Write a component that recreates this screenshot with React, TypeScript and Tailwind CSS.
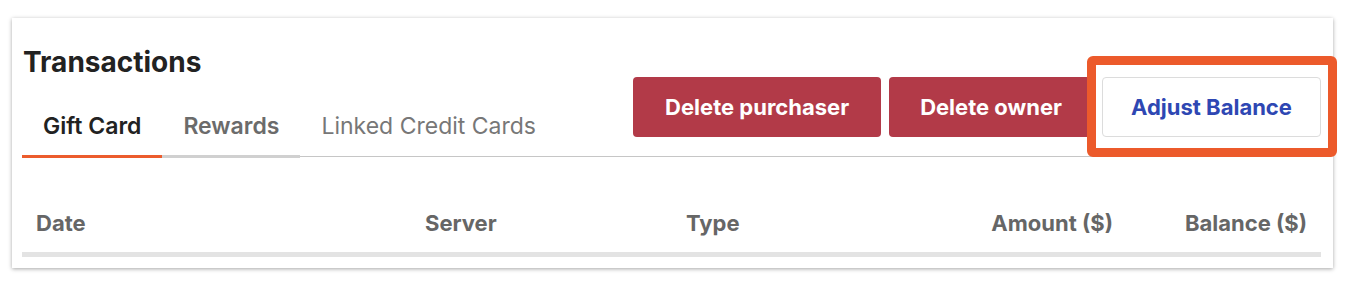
const TABS = [
  { label: "Gift Card", active: true },
  { label: "Rewards", visited: true },
  { label: "Linked Credit Cards" },
];

export default function App() {
  return (
    <div className="w-[1348px] h-[282px] bg-white pt-[18px] pl-[12px] font-['Inter',sans-serif]">
      <div className="w-[1321px] h-[250px] bg-white px-[10px] shadow-[0_1px_4px_rgba(0,0,0,0.35)]">
        <div className="flex justify-between h-[139px] border-b border-[#c6c6c6]">
          <div className="flex flex-col justify-between">
            <h1 className="pt-[28px] pl-[1px] text-[28px] leading-[32px] font-bold text-[#222]">
              Transactions
            </h1>
            <div className="flex mb-[-2px]">
              {TABS.map((tab) => (
                <div
                  key={tab.label}
                  className={`px-[21px] pb-[17px] text-[23px] leading-[24px] border-b-[3px] ${
                    tab.active
                      ? "border-[#ec5c2d] font-semibold text-[#222]"
                      : tab.visited
                        ? "border-[#d0d0d0] font-semibold text-[#6b6b6b]"
                        : "border-transparent text-[#777]"
                  }`}
                >
                  {tab.label}
                </div>
              ))}
            </div>
          </div>
          <div className="flex items-start gap-[8px] mt-[59px] mr-[2px]">
            <button
              type="button"
              className="h-[60px] px-[32px] rounded-[4px] bg-[#b23a48] text-white text-[22px] font-bold"
            >
              Delete purchaser
            </button>
            <button
              type="button"
              className="h-[60px] px-[31px] rounded-[4px] bg-[#b23a48] text-white text-[22px] font-bold"
            >
              Delete owner
            </button>
            <div className="relative ml-[1px]">
              <button
                type="button"
                className="w-[219px] h-[60px] rounded-[4px] border border-[#dcdcdc] bg-white text-[#2e47b3] text-[22px] font-bold"
              >
                Adjust Balance
              </button>
              <div className="absolute -left-[15px] -right-[16px] -top-[21px] -bottom-[20px] z-10 border-[9px] border-[#ec5a2b] rounded-[6px]" />
            </div>
          </div>
        </div>

        <div className="flex items-end h-[95px] pb-[12px] pl-[14px] pr-[16px] text-[22px] font-bold text-[#666]">
          <div className="w-[389px]">Date</div>
          <div className="w-[261px]">Server</div>
          <div className="flex-1">Type</div>
          <div className="w-[160px] text-right">Amount ($)</div>
          <div className="w-[194px] text-right">Balance ($)</div>
        </div>
        <div className="h-[5px] mr-[2px] bg-[#e3e3e3]" />
      </div>
    </div>
  );
}
